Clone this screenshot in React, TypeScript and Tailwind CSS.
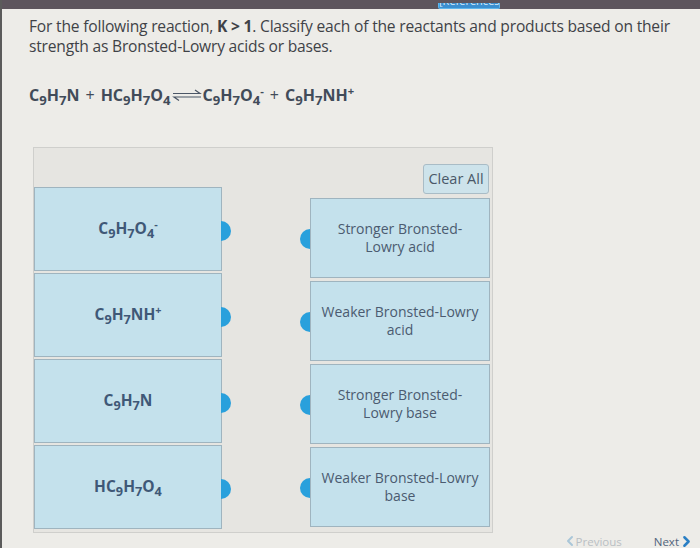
import { ChevronLeft, ChevronRight } from "lucide-react";

type Formula = { parts: [string, "n" | "sub" | "sup"][] };

const F = (...parts: [string, "n" | "sub" | "sup"][]): Formula => ({ parts });

const C9H7N = F(["C", "n"], ["9", "sub"], ["H", "n"], ["7", "sub"], ["N", "n"]);
const HC9H7O4 = F(["HC", "n"], ["9", "sub"], ["H", "n"], ["7", "sub"], ["O", "n"], ["4", "sub"]);
const C9H7O4m = F(["C", "n"], ["9", "sub"], ["H", "n"], ["7", "sub"], ["O", "n"], ["4", "sub"], ["-", "sup"]);
const C9H7NHp = F(["C", "n"], ["9", "sub"], ["H", "n"], ["7", "sub"], ["NH", "n"], ["+", "sup"]);

function Chem({ f }: { f: Formula }) {
  return (
    <span className="whitespace-nowrap">
      {f.parts.map(([t, k], i) =>
        k === "n" ? (
          <span key={i}>{t}</span>
        ) : k === "sub" ? (
          <span key={i} className="relative top-[4px] text-[0.82em] leading-none">
            {t}
          </span>
        ) : (
          <span key={i} className="relative top-[-6px] text-[0.7em] leading-none">
            {t}
          </span>
        )
      )}
    </span>
  );
}

// equilibrium harpoons
function Equilibrium() {
  return (
    <svg width="30" height="12" viewBox="0 0 30 12" className="mx-[1px] inline-block">
      <path d="M1 4.5 H28 L23 1" fill="none" stroke="#4b5666" strokeWidth="1.2" />
      <path d="M29 8 H2 L7 11.5" fill="none" stroke="#4b5666" strokeWidth="1.2" />
    </svg>
  );
}

const left = [C9H7O4m, C9H7NHp, C9H7N, HC9H7O4];
const right = [
  "Stronger Bronsted-\nLowry acid",
  "Weaker Bronsted-Lowry\nacid",
  "Stronger Bronsted-\nLowry base",
  "Weaker Bronsted-Lowry\nbase",
];

export default function App() {
  return (
    <div
      className="relative h-[548px] w-[700px] overflow-hidden border-l-[2px] border-[#5b5b5b] bg-[#edece8] text-[#3d4045]"
      style={{ fontFamily: '"Open Sans", "Noto Sans", sans-serif' }}
    >
      {/* top toolbar strip */}
      <div className="flex h-[9px] items-end bg-[#5d555d]">
        <div className="ml-[436px] h-[6px] w-[62px] overflow-hidden rounded-b-[2px] border-x border-b border-[#5fb6ea] bg-[#3b8fd0]">
          <div className="-mt-[9px] text-center text-[11px] leading-[13px] text-[#d6ecfa]">[References]</div>
        </div>
      </div>

      <div className="pl-[27px] pr-[10px] pt-[7px]">
        <p className="text-[15.6px] leading-[20px] tracking-[-0.2px] text-[#3f4247]">
          For the following reaction, <b className="font-bold">K</b> <b className="font-bold">&gt;</b>{" "}
          <b className="font-bold">1</b>. Classify each of the reactants and products based on their strength as
          Bronsted-Lowry acids or bases.
        </p>

        <div className="mt-[27px] flex items-center text-[16px] font-bold text-[#414b59]">
          <Chem f={C9H7N} />
          <span className="mx-[6px] font-normal">+</span>
          <Chem f={HC9H7O4} />
          <Equilibrium />
          <Chem f={C9H7O4m} />
          <span className="mx-[6px] font-normal">+</span>
          <Chem f={C9H7NHp} />
        </div>
      </div>

      {/* drag and drop panel */}
      <div className="ml-[31px] mt-[40px] h-[386px] w-[460px] border border-[#cfcfcc] bg-[#e6e5e1] pr-[2px]">
        <div className="flex justify-end pr-[1px] pt-[16px]">
          <button className="h-[30px] w-[66px] rounded-[3px] border border-[#a9bcc6] bg-[#cde3eb] text-[14.5px] text-[#4a5868]">
            Clear All
          </button>
        </div>

        <div className="-mt-[7px] flex justify-between">
          <div className="flex w-[188px] flex-col gap-[2px]">
            {left.map((f, i) => (
              <div
                key={i}
                className="relative flex h-[84px] items-center justify-center border border-[#9fb4bf] bg-[#c4e1ec] text-[15.5px] font-bold text-[#3f5877]"
              >
                <Chem f={f} />
                <span className="absolute right-[-10px] top-[52%] h-[20px] w-[10px] -translate-y-1/2 rounded-r-full bg-[#29a0dc]" />
              </div>
            ))}
          </div>

          <div className="mt-[11px] flex w-[180px] flex-col gap-[3px]">
            {right.map((t, i) => (
              <div
                key={i}
                className="relative flex h-[80px] items-center justify-center whitespace-pre-line border border-[#9fb4bf] bg-[#c4e1ec] text-center text-[14px] leading-[18px] text-[#4b5b70]"
              >
                {t}
                <span className="absolute left-[-11px] top-[40px] h-[20px] w-[10px] -translate-y-1/2 rounded-l-full bg-[#29a0dc]" />
              </div>
            ))}
          </div>
        </div>
      </div>

      {/* pager */}
      <div className="absolute bottom-[-2px] right-[5px] flex items-center text-[11.5px]">
        <ChevronLeft size={16} strokeWidth={3} className="text-[#a9c6d8]" />
        <span className="-ml-[2px] text-[#b9bfc4]">Previous</span>
        <span className="ml-[32px] text-[#51647c]">Next</span>
        <ChevronRight size={17} strokeWidth={3.5} className="-ml-[1px] text-[#2a7fc4]" />
      </div>
    </div>
  );
}
